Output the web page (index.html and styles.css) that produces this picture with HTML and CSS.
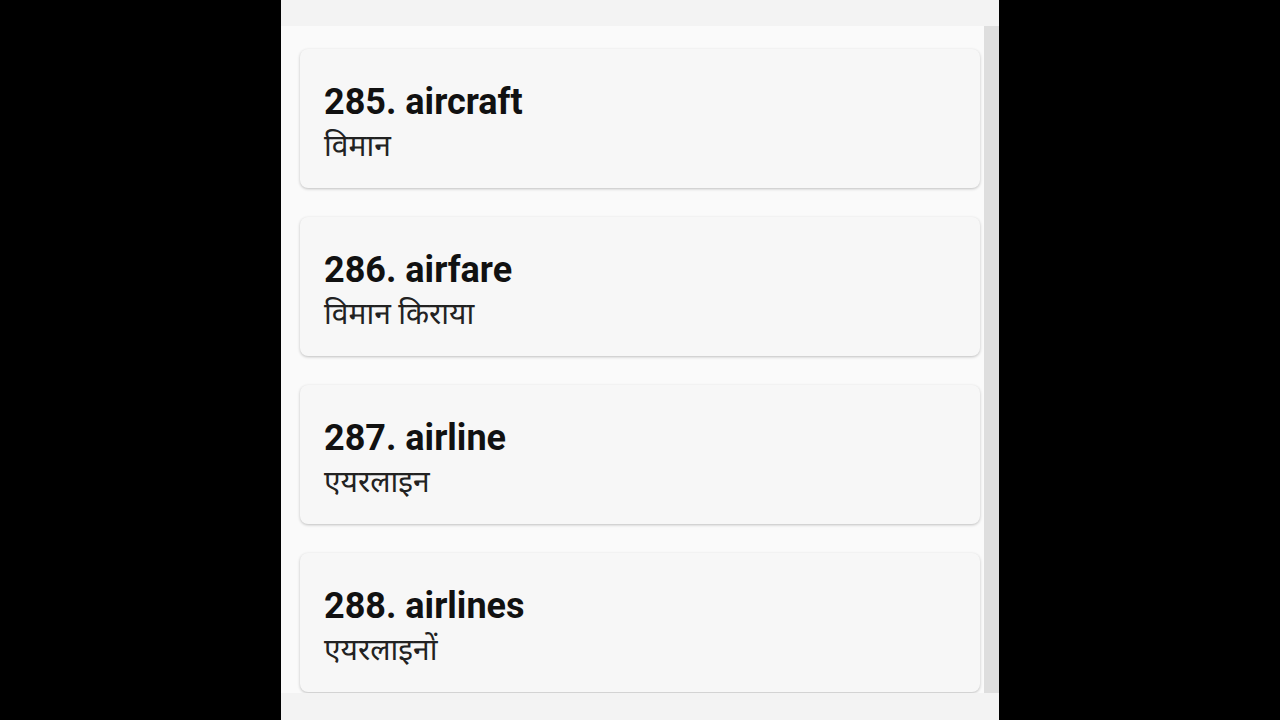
FILE: index.html
```html
<!DOCTYPE html>
<html lang="hi">
<head>
    <meta charset="UTF-8">
    <meta name="viewport" content="width=device-width, initial-scale=1.0">
    <title>Word List</title>
    <link rel="stylesheet" href="styles.css">
</head>
<body>
    <div class="screen">
        <div class="top-bar"></div>
        <div class="list-area">
            <div class="word-list">
                <div class="card">
                    <div class="word">285. aircraft</div>
                    <div class="meaning">विमान</div>
                </div>
                <div class="card">
                    <div class="word">286. airfare</div>
                    <div class="meaning">विमान किराया</div>
                </div>
                <div class="card">
                    <div class="word">287. airline</div>
                    <div class="meaning">एयरलाइन</div>
                </div>
                <div class="card">
                    <div class="word">288. airlines</div>
                    <div class="meaning">एयरलाइनों</div>
                </div>
            </div>
            <div class="scroll-track"></div>
        </div>
        <div class="bottom-bar"></div>
    </div>
</body>
</html>
```

FILE: styles.css
```css
html, body {
    margin: 0;
    padding: 0;
    height: 100%;
}

body {
    background-color: #000;
    font-family: Roboto, "Noto Sans", Arial, sans-serif;
    display: flex;
    justify-content: center;
}

.screen {
    width: 718px;
    height: 720px;
    display: flex;
    flex-direction: column;
    background-color: #f3f3f3;
}

.top-bar {
    height: 26px;
    background-color: #f3f3f3;
}

.list-area {
    height: 667px;
    display: flex;
    background-color: #fafafa;
    overflow: hidden;
}

.word-list {
    flex: 1;
    padding: 23px 4px 0 19px;
    display: flex;
    flex-direction: column;
    gap: 29px;
}

.scroll-track {
    width: 15px;
    background-color: #dedede;
}

.card {
    height: 139px;
    box-sizing: border-box;
    padding: 32px 24px 0 24px;
    background-color: #f7f7f7;
    border-radius: 8px;
    box-shadow: 0 1px 3px rgba(0, 0, 0, 0.24);
    flex-shrink: 0;
}

.word {
    font-size: 36px;
    font-weight: bold;
    color: #111;
    line-height: 42px;
}

.meaning {
    font-size: 30px;
    color: #222;
    line-height: 46px;
}

.bottom-bar {
    height: 27px;
    background-color: #f3f3f3;
}
```
